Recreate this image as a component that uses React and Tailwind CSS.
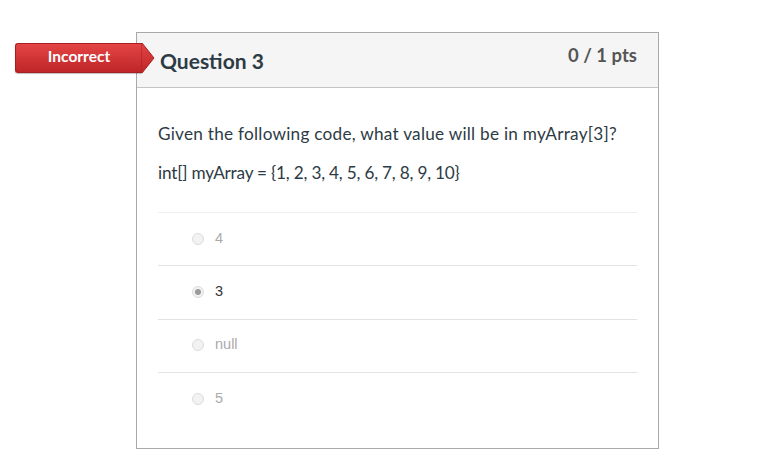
const answers = [
  { label: "4", selected: false },
  { label: "3", selected: true },
  { label: "null", selected: false },
  { label: "5", selected: false },
];

// Radio bullet
const Radio = ({ selected }) => (
  <span className="w-[12px] h-[12px] rounded-full border border-[#dcdcdc] bg-[#f2f2f2] flex items-center justify-center shrink-0">
    {selected && <span className="w-[6px] h-[6px] rounded-full bg-[#9a9a9a]" />}
  </span>
);

export default function App() {
  return (
    <div className="w-[758px] h-[462px] bg-white font-['Lato','Liberation_Sans',sans-serif] pt-[32px] pl-[136px] relative">
      {/* Incorrect flag */}
      <div className="absolute left-[15px] top-[43px] flex items-center">
        <div className="w-[127px] h-[30px] rounded-l-[3px] bg-gradient-to-b from-[#e44444] to-[#bf2527] border border-[#a81f21] border-r-0 flex items-center justify-center text-white text-[15.5px] font-bold pb-[3px] shadow-[0_1px_1px_rgba(0,0,0,0.25)]">
          Incorrect
        </div>
        <svg width="14" height="30" viewBox="0 0 14 30" className="-ml-px">
          <defs>
            <linearGradient id="flag" x1="0" y1="0" x2="0" y2="1">
              <stop offset="0" stopColor="#e44444" />
              <stop offset="1" stopColor="#bf2527" />
            </linearGradient>
          </defs>
          <path d="M0 0 L1 0 L13 15 L1 30 L0 30 Z" fill="url(#flag)" stroke="#a81f21" strokeWidth="1" />
        </svg>
      </div>

      <div className="w-[523px] h-[417px] border border-[#a9a9a9] flex flex-col">
        <div className="h-[55px] bg-[#f5f5f5] border-b border-[#c4c4c4] flex justify-between pl-[23px] pr-[21px] shrink-0">
          <span className="text-[21px] font-bold text-[#2d3b45] mt-[12px]">Question 3</span>
          <span className="text-[18.5px] font-bold text-[#555555] mt-[9px]">0 / 1 pts</span>
        </div>
        <div className="px-[21px] pt-[33px]">
          <p className="text-[17.2px] tracking-[0.25px] text-[#2d3b45] leading-[26px]">
            Given the following code, what value will be in myArray[3]?
          </p>
          <p className="text-[17.2px] tracking-[-0.2px] text-[#2d3b45] leading-[26px] mt-[13px]">
            int[] myArray = {"{1, 2, 3, 4, 5, 6, 7, 8, 9, 10}"}
          </p>
          <div className="mt-[26px]">
            {answers.map((a) => (
              <div
                key={a.label}
                className="h-[53.3px] border-t border-[#e3e3e3] first:border-[#eeeeee] flex items-center gap-[11px] pl-[34px] pb-[1px]"
              >
                <Radio selected={a.selected} />
                <span
                  className={
                    "text-[14.5px] font-['Liberation_Sans',sans-serif] " +
                    (a.selected ? "text-[#333333]" : "text-[#aaaaaa]")
                  }
                >
                  {a.label}
                </span>
              </div>
            ))}
          </div>
        </div>
      </div>
    </div>
  );
}
